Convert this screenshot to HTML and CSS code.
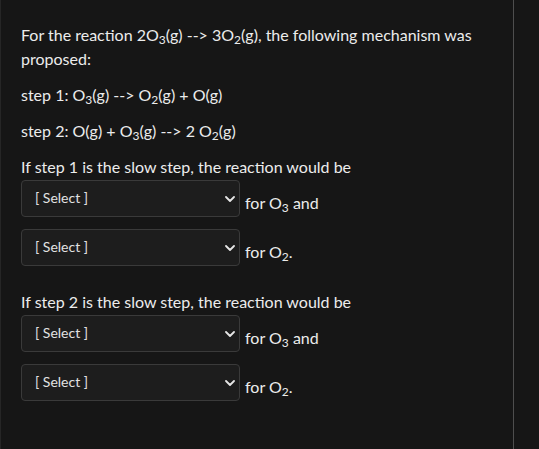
FILE: index.html
```html
<!DOCTYPE html>
<html>
<head>
<meta charset="utf-8">
<link rel="stylesheet" href="styles.css">
</head>
<body>
<div class="page">
  <div class="question">
    <p class="text">For the reaction 2O<sub>3</sub>(g) --&gt; 3O<sub>2</sub>(g), the following mechanism was proposed:</p>
    <p class="text">step 1: O<sub>3</sub>(g) --&gt; O<sub>2</sub>(g) + O(g)</p>
    <p class="text">step 2: O(g) + O<sub>3</sub>(g) --&gt; 2 O<sub>2</sub>(g)</p>
    <p class="text">If step 1 is the slow step, the reaction would be</p>
    <div class="rows">
      <div class="row">
        <span class="select-wrap">
          <select class="select"><option>[ Select ]</option></select>
          <svg class="chev" width="10" height="6" viewBox="0 0 10 6"><path d="M1 1 L5 5 L9 1" fill="none" stroke="#e6e6e6" stroke-width="1.8" stroke-linecap="round" stroke-linejoin="round"/></svg>
        </span>
        <span class="label">for O<sub>3</sub> and</span>
      </div>
      <div class="row">
        <span class="select-wrap">
          <select class="select"><option>[ Select ]</option></select>
          <svg class="chev" width="10" height="6" viewBox="0 0 10 6"><path d="M1 1 L5 5 L9 1" fill="none" stroke="#e6e6e6" stroke-width="1.8" stroke-linecap="round" stroke-linejoin="round"/></svg>
        </span>
        <span class="label">for O<sub>2</sub>.</span>
      </div>
    </div>
    <p class="text second">If step 2 is the slow step, the reaction would be</p>
    <div class="rows">
      <div class="row">
        <span class="select-wrap">
          <select class="select"><option>[ Select ]</option></select>
          <svg class="chev" width="10" height="6" viewBox="0 0 10 6"><path d="M1 1 L5 5 L9 1" fill="none" stroke="#e6e6e6" stroke-width="1.8" stroke-linecap="round" stroke-linejoin="round"/></svg>
        </span>
        <span class="label">for O<sub>3</sub> and</span>
      </div>
      <div class="row">
        <span class="select-wrap">
          <select class="select"><option>[ Select ]</option></select>
          <svg class="chev" width="10" height="6" viewBox="0 0 10 6"><path d="M1 1 L5 5 L9 1" fill="none" stroke="#e6e6e6" stroke-width="1.8" stroke-linecap="round" stroke-linejoin="round"/></svg>
        </span>
        <span class="label">for O<sub>2</sub>.</span>
      </div>
    </div>
  </div>
</div>
</body>
</html>
```

FILE: styles.css
```css
html, body {
  margin: 0;
  padding: 0;
  background: #161616;
  height: 100%;
}
body {
  font-family: Lato, "Open Sans", sans-serif;
  color: #ececec;
}
.page {
  width: 512px;
  height: 449px;
  border-left: 1px solid #262626;
  border-right: 1px solid #4e4e4e;
  box-sizing: content-box;
}
.question {
  padding: 11px 20px 0 20px;
}
.text {
  margin: 12px 0 0 0;
  font-size: 16px;
  line-height: 24px;
}
.text.second {
  margin-top: 24px;
}
sub {
  font-size: 0.75em;
  line-height: 0;
  vertical-align: -0.28em;
}
.rows {
  display: flex;
  flex-direction: column;
  gap: 12px;
  margin-top: 1px;
}
.row {
  display: flex;
  align-items: flex-start;
  gap: 5px;
}
.select-wrap {
  position: relative;
  display: block;
  width: 219px;
  height: 37px;
}
.select {
  -webkit-appearance: none;
  appearance: none;
  width: 100%;
  height: 100%;
  box-sizing: border-box;
  margin: 0;
  padding: 0 24px 2px 13px;
  background: #1d1d1d;
  border: 1px solid #3a3a3a;
  border-radius: 4px;
  color: #e2e2e2;
  font-family: Lato, "Open Sans", sans-serif;
  font-size: 14px;
  outline: none;
}
.chev {
  position: absolute;
  right: 5px;
  top: 16px;
  pointer-events: none;
}
.label {
  font-size: 16px;
  line-height: 24px;
  margin-top: 11px;
}
```
